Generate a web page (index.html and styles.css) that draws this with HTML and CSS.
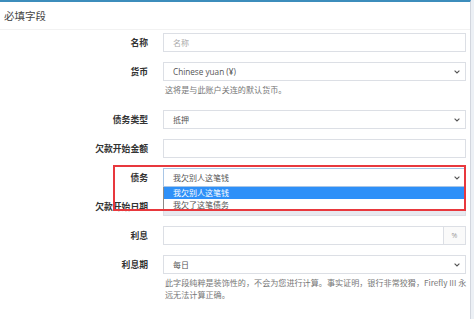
FILE: index.html
```html
<!DOCTYPE html>
<html lang="zh">
<head>
<meta charset="utf-8">
<link rel="stylesheet" href="styles.css">
</head>
<body>
<div class="box">
  <div class="box-header"><h3 class="box-title">必填字段</h3></div>
  <div class="box-body">
    <div class="form-group">
      <label class="lbl">名称</label>
      <div class="col">
        <div class="control placeholder">名称</div>
      </div>
    </div>
    <div class="form-group">
      <label class="lbl">货币</label>
      <div class="col">
        <div class="control select latin">Chinese yuan (¥)<svg class="chev" viewBox="0 0 6 4"><path d="M0.6 0.6 L3 3 L5.4 0.6"/></svg></div>
        <p class="help">这将是与此账户关连的默认货币。</p>
      </div>
    </div>
    <div class="form-group">
      <label class="lbl">债务类型</label>
      <div class="col">
        <div class="control select">抵押<svg class="chev" viewBox="0 0 6 4"><path d="M0.6 0.6 L3 3 L5.4 0.6"/></svg></div>
      </div>
    </div>
    <div class="form-group">
      <label class="lbl">欠款开始金额</label>
      <div class="col">
        <div class="control"></div>
      </div>
    </div>
    <div class="form-group">
      <label class="lbl">债务</label>
      <div class="col dd-anchor">
        <div class="control select focus">我欠别人这笔钱<svg class="chev" viewBox="0 0 6 4"><path d="M0.6 0.6 L3 3 L5.4 0.6"/></svg></div>
        <ul class="dropdown">
          <li class="opt active">我欠别人这笔钱</li>
          <li class="opt">我欠了这笔债务</li>
        </ul>
      </div>
    </div>
    <div class="form-group">
      <label class="lbl">欠款开始日期</label>
      <div class="col">
        <div class="control readonly"></div>
      </div>
    </div>
    <div class="form-group">
      <label class="lbl">利息</label>
      <div class="col">
        <div class="input-group">
          <div class="control grow"></div>
          <span class="addon">%</span>
        </div>
      </div>
    </div>
    <div class="form-group">
      <label class="lbl">利息期</label>
      <div class="col">
        <div class="control select">每日<svg class="chev" viewBox="0 0 6 4"><path d="M0.6 0.6 L3 3 L5.4 0.6"/></svg></div>
        <p class="help">此字段纯粹是装饰性的，不会为您进行计算。事实证明，银行非常狡猾，Firefly III 永远无法计算正确。</p>
      </div>
    </div>
  </div>
  <div class="highlight"></div>
</div>
</body>
</html>
```
FILE: styles.css
```css
html, body {
  margin: 0;
  padding: 0;
  background: #ecf0f5;
  font-family: "Open Sans", "Noto Sans CJK SC", sans-serif;
}
.box {
  position: relative;
  width: 470px;
  min-height: 330px;
  background: #fff;
  border-top: 2px solid #3c8dbc;
  border-right: 1px solid #d2d6de;
}
.box-header {
  height: 27px;
  border-bottom: 1px solid #f2f2f2;
  padding-left: 4px;
}
.box-title {
  margin: 0;
  font-family: "Noto Sans CJK SC", sans-serif;
  font-weight: 400;
  font-size: 10.5px;
  line-height: 27px;
  color: #444;
}
.box-body {
  padding: 3px 4px 0 0;
}
.form-group {
  display: flex;
  align-items: flex-start;
  margin-bottom: 10px;
}
.lbl {
  width: 148px;
  flex: none;
  text-align: right;
  font-family: "Noto Sans CJK SC", sans-serif;
  font-weight: 700;
  font-size: 8.8px;
  line-height: 19px;
  color: #333;
}
.col {
  margin-left: 15px;
  width: 303px;
  flex: none;
}
.dd-anchor {
  position: relative;
}
.control {
  position: relative;
  box-sizing: border-box;
  height: 19px;
  border: 1px solid #dcdfe5;
  padding: 0 9px;
  font-family: "Noto Sans CJK SC", sans-serif;
  font-size: 8px;
  line-height: 17px;
  color: #555;
  background: #fff;
}
.control.latin {
  font-family: "Open Sans", sans-serif;
  font-size: 8.2px;
}
.control.placeholder {
  color: #aaa;
}
.control.focus {
  border-color: #a9c6e6;
}
.control.readonly {
  background: #e8e9ef;
}
.chev {
  position: absolute;
  right: 5px;
  top: 7px;
  width: 6px;
  height: 4px;
  fill: none;
  stroke: #555;
  stroke-width: 1.1;
}
.help {
  margin: 3px -8px 4px 2px;
  font-family: "Noto Sans CJK SC", sans-serif;
  font-size: 8.1px;
  line-height: 12px;
  color: #777;
}
.input-group {
  display: flex;
}
.grow {
  flex: 1;
}
.addon {
  box-sizing: border-box;
  width: 22px;
  height: 19px;
  border: 1px solid #dcdfe5;
  border-left: 0;
  background: #fafafa;
  font-size: 7px;
  line-height: 17px;
  text-align: center;
  color: #999;
}
.dropdown {
  position: absolute;
  left: 0;
  top: 19px;
  width: 303px;
  margin: 0;
  padding: 0;
  list-style: none;
  box-sizing: border-box;
  background: #fff;
  border: 1px solid #8a8a8a;
  border-top: 0;
  z-index: 2;
}
.opt {
  height: 11.5px;
  padding-left: 9px;
  font-family: "Noto Sans CJK SC", sans-serif;
  font-size: 8px;
  line-height: 11.5px;
  color: #555;
}
.opt.active {
  background: #2e90f8;
  color: #fff;
}
.highlight {
  position: absolute;
  left: 113px;
  top: 163px;
  width: 353px;
  height: 46px;
  box-sizing: border-box;
  border: 2px solid #e8383d;
  z-index: 3;
  pointer-events: none;
}
```
